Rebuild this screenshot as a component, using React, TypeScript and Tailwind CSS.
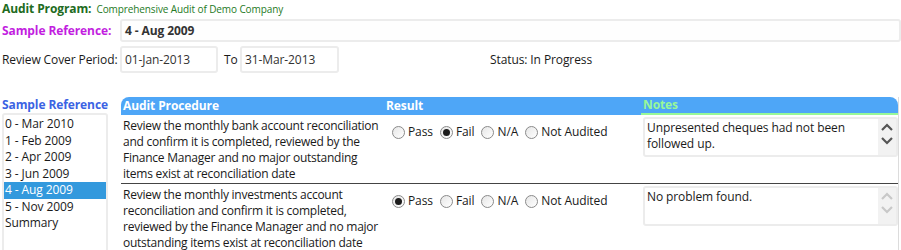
import { useState } from "react";

const samples = [
  "0 - Mar 2010",
  "1 - Feb 2009",
  "2 - Apr 2009",
  "3 - Jun 2009",
  "4 - Aug 2009",
  "5 - Nov 2009",
  "Summary",
];

const options = ["Pass", "Fail", "N/A", "Not Audited"];

interface RowData {
  procedure: string;
  result: string;
  notes: string;
  scroll: boolean;
}

const rows: RowData[] = [
  {
    procedure:
      "Review the monthly bank account reconciliation and confirm it is completed, reviewed by the Finance Manager and no major outstanding items exist at reconciliation date",
    result: "Fail",
    notes: "Unpresented cheques had not been followed up.",
    scroll: true,
  },
  {
    procedure:
      "Review the monthly investments account reconciliation and confirm it is completed, reviewed by the Finance Manager and no major outstanding items exist at reconciliation date",
    result: "Pass",
    notes: "No problem found.",
    scroll: false,
  },
];

const Radio = ({ checked }: { checked: boolean }) => (
  <span className="relative inline-flex items-center justify-center w-[13px] h-[13px] rounded-full border border-[#8a8a8a] bg-gradient-to-br from-[#e6e6e6] to-white shrink-0">
    {checked && <span className="w-[7px] h-[7px] rounded-full bg-[#1c1c1c]" />}
  </span>
);

const Chevron = ({ up, on }: { up: boolean; on: boolean }) => (
  <svg width="14" height="10" viewBox="0 0 14 10">
    <path
      d={up ? "M2 8 L7 3 L12 8" : "M2 2 L7 7 L12 2"}
      fill="none"
      stroke={on ? "#555" : "#c8c8c8"}
      strokeWidth="2.2"
    />
  </svg>
);

const Row = ({ row, last }: { row: RowData; last: boolean }) => {
  const [result, setResult] = useState(row.result);
  return (
    <div className={`flex ${last ? "" : "border-b border-[#444]"}`}>
      <div className="w-[262px] pl-[2px] pt-[3px] pb-[1px] leading-[16px] shrink-0 tracking-[-0.25px]">
        {row.procedure}
      </div>
      <div className="w-[258px] shrink-0 pl-[9px] pt-[8px] flex items-start gap-[7px]">
        {options.map((o) => (
          <label
            key={o}
            className="flex items-center gap-[3px] cursor-pointer"
            onClick={() => setResult(o)}
          >
            <Radio checked={result === o} />
            <span>{o}</span>
          </label>
        ))}
      </div>
      <div className="flex-1 pt-[2px] pb-[2px] pl-[2px]">
        <div className="flex h-[40px] border-2 border-[#ececec] rounded-[3px] bg-white">
          <div className="flex-1 px-[2px] leading-[16px] pt-[1px]">{row.notes}</div>
          <div className="w-[18px] bg-[#f2f2f2] flex flex-col items-center pt-[3px] gap-[4px]">
            <Chevron up on={row.scroll} />
            <Chevron up={false} on={row.scroll} />
          </div>
        </div>
      </div>
    </div>
  );
};

export default function App() {
  const [selected, setSelected] = useState(4);

  return (
    <div className="w-[901px] h-[250px] overflow-hidden bg-white text-[12px] text-[#1a1a1a] font-['Open_Sans',sans-serif] tracking-[-0.1px]">
      <div className="flex items-baseline gap-[5px] pl-[2px] h-[17px]">
        <span className="font-bold text-[12px] text-[#216b21]">Audit Program:</span>
        <span className="text-[10px] text-[#257a25]">Comprehensive Audit of Demo Company</span>
      </div>

      <div className="flex items-center pl-[2px] mt-[2px]">
        <span className="w-[118px] font-bold text-[12px] text-[#c21ee0]">Sample Reference:</span>
        <div className="flex-1 h-[23px] border-2 border-[#ececec] rounded-[3px] bg-[#fefefe] pl-[3px] flex items-center font-bold text-[#333]">
          4 - Aug 2009
        </div>
      </div>

      <div className="flex items-center pl-[2px] mt-[4px]">
        <span className="w-[118px]">Review Cover Period:</span>
        <div className="w-[98px] h-[27px] border-2 border-[#ececec] rounded-[3px] pl-[3px] flex items-center text-[#333]">
          01-Jan-2013
        </div>
        <span className="w-[22px] pl-[6px]">To</span>
        <div className="w-[99px] h-[27px] border-2 border-[#ececec] rounded-[3px] pl-[3px] flex items-center text-[#333]">
          31-Mar-2013
        </div>
        <span className="ml-[151px]">Status: In Progress</span>
      </div>

      <div className="flex mt-[24px]">
        <div className="w-[121px] shrink-0 pl-[2px]">
          <div className="font-bold text-[#3b63e3] leading-[16px]">Sample Reference</div>
          <ul className="w-[106px] h-[150px] border-2 border-[#ececec] rounded-[3px] pt-[1px]">
            {samples.map((s, i) => (
              <li
                key={s}
                onClick={() => setSelected(i)}
                className={`pl-[1px] leading-[16.5px] cursor-pointer ${
                  selected === i ? "bg-[#3399dd] text-white" : ""
                }`}
              >
                {s}
              </li>
            ))}
          </ul>
        </div>

        <div className="flex-1 mr-[2px] border-r border-[#dcdcdc]">
          <div className="flex h-[18px] bg-[#4ea6f7] rounded-t-[8px] text-white font-bold leading-[18px]">
            <div className="w-[262px] pl-[2px]">Audit Procedure</div>
            <div className="w-[258px] pl-[3px]">Result</div>
            <div className="flex-1 pl-[2px] text-[#98f898] border-b-2 border-[#98f898] leading-[16px]">Notes</div>
          </div>
          {rows.map((r, i) => (
            <Row key={i} row={r} last={i === rows.length - 1} />
          ))}
        </div>
      </div>
    </div>
  );
}
